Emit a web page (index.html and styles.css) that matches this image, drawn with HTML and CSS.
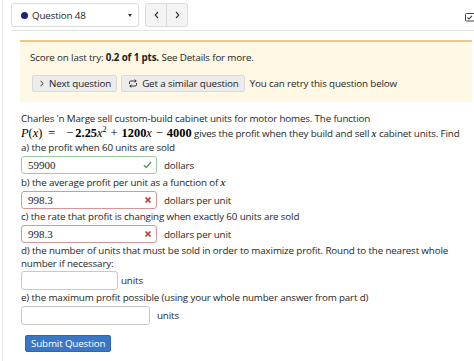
FILE: index.html
```html
<!DOCTYPE html>
<html>
<head>
<meta charset="utf-8">
<link rel="stylesheet" href="styles.css">
</head>
<body>
<div class="page">
  <div class="topbar">
    <div class="qselect">
      <span class="dot"></span>
      <span class="qlabel">Question 48</span>
      <span class="caret"></span>
    </div>
    <div class="navgroup">
      <span class="navbtn"><svg width="5" height="8" viewBox="0 0 5 8"><polyline points="4,1 1.2,4 4,7" fill="none" stroke="#333" stroke-width="1.1"/></svg></span>
      <span class="navbtn"><svg width="5" height="8" viewBox="0 0 5 8"><polyline points="1,1 3.8,4 1,7" fill="none" stroke="#333" stroke-width="1.1"/></svg></span>
    </div>
    <svg class="cornericon" width="9" height="9" viewBox="0 0 9 9"><rect x="0.5" y="0.5" width="11" height="7.5" rx="1" fill="none" stroke="#444" stroke-width="1"/><polyline points="2.5,4.5 4,6 7,2.8" fill="none" stroke="#444" stroke-width="1.1"/></svg>
  </div>

  <div class="scorebox">
    <div class="scoreline">Score on last try: <b>0.2 of 1 pts.</b> See Details for more.</div>
    <div class="actions">
      <span class="btn"><svg width="6" height="7" viewBox="0 0 6 7"><polyline points="1.5,1 4.2,3.5 1.5,6" fill="none" stroke="#333" stroke-width="1"/></svg>Next question</span>
      <span class="btn"><svg width="10" height="9" viewBox="0 0 10 9"><path d="M1.5 5 V3.2 Q1.5 2 2.8 2 H8.2 M6.6 0.6 L8.2 2 L6.6 3.4" fill="none" stroke="#333" stroke-width="1"/><path d="M8.5 4 V5.8 Q8.5 7 7.2 7 H1.8 M3.4 5.6 L1.8 7 L3.4 8.4" fill="none" stroke="#333" stroke-width="1"/></svg>Get a similar question</span>
      <span class="retry">You can retry this question below</span>
    </div>
  </div>

  <div class="question">
    <div class="line">Charles 'n Marge sell custom-build cabinet units for motor homes. The function</div>
    <div class="line"><span class="math"><i>P</i>(<i>x</i>)<span class="op eq">=</span><span class="op">−</span><span class="num">2.25</span><i>x</i><sup>2</sup><span class="op">+</span><span class="num">1200</span><i>x</i><span class="op">−</span><span class="num">4000</span></span> gives the profit when they build and sell <i class="mx">x</i> cabinet units. Find</div>
    <div class="line">a) the profit when 60 units are sold</div>
    <div class="ansrow">
      <span class="field correct w-long">59900<svg class="mark" width="9" height="8" viewBox="0 0 9 8"><polyline points="1,4.2 3.3,6.5 8,1.2" fill="none" stroke="#4f9f4f" stroke-width="1.5"/></svg></span>
      <span class="unit">dollars</span>
    </div>
    <div class="line">b) the average profit per unit as a function of <i class="mx">x</i></div>
    <div class="ansrow">
      <span class="field wrong w-long">998.3<svg class="mark" width="8" height="8" viewBox="0 0 8 8"><path d="M1.5 1.5 L6.5 6.5 M6.5 1.5 L1.5 6.5" stroke="#c0392b" stroke-width="1.7"/></svg></span>
      <span class="unit">dollars per unit</span>
    </div>
    <div class="line">c) the rate that profit is changing when exactly 60 units are sold</div>
    <div class="ansrow">
      <span class="field wrong w-long">998.3<svg class="mark" width="8" height="8" viewBox="0 0 8 8"><path d="M1.5 1.5 L6.5 6.5 M6.5 1.5 L1.5 6.5" stroke="#c0392b" stroke-width="1.7"/></svg></span>
      <span class="unit">dollars per unit</span>
    </div>
    <div class="line tight">d) the number of units that must be sold in order to maximize profit. Round to the nearest whole number if necessary:</div>
    <div class="ansrow">
      <span class="field w-short"></span>
      <span class="unit near">units</span>
    </div>
    <div class="line">e) the maximum profit possible (using your whole number answer from part d)</div>
    <div class="ansrow">
      <span class="field w-mid"></span>
      <span class="unit">units</span>
    </div>
    <div class="submitrow">
      <span class="submit">Submit Question</span>
    </div>
  </div>
</div>
</body>
</html>
```

FILE: styles.css
```css
html, body {
  margin: 0;
  padding: 0;
  background: #fff;
  overflow: hidden;
}
body {
  font-family: "Open Sans", "Liberation Sans", sans-serif;
  font-size: 9.8px;
  letter-spacing: -0.15px;
  color: #1e1e1e;
  padding-left: 2px;
}
.page {
  border-left: 1px solid #e6e6e6;
  min-height: 361px;
}
.topbar {
  margin-left: 8px;
  height: 27px;
  padding-top: 3px;
  border-bottom: 1px solid #e4e4e4;
  display: flex;
  align-items: flex-start;
}
.qselect {
  box-sizing: border-box;
  width: 128px;
  height: 24px;
  border: 1px solid #dcdcdc;
  border-radius: 3px;
  display: flex;
  align-items: center;
  padding-left: 9px;
  padding-right: 6px;
  background: #fff;
}
.dot {
  width: 7px;
  height: 7px;
  border-radius: 50%;
  background: #1d2080;
  margin-right: 4px;
}
.qlabel {
  flex: 1;
}
.caret {
  width: 0;
  height: 0;
  border-left: 2.5px solid transparent;
  border-right: 2.5px solid transparent;
  border-top: 3.5px solid #333;
}
.navgroup {
  margin-left: 6px;
  height: 24px;
  box-sizing: border-box;
  border: 1px solid #dcdcdc;
  border-radius: 3px;
  background: #f4f4f4;
  display: flex;
}
.navbtn {
  width: 20px;
  display: flex;
  align-items: center;
  justify-content: center;
}
.navbtn + .navbtn {
  border-left: 1px solid #dcdcdc;
}
.cornericon {
  margin-left: auto;
  margin-top: 10px;
}
.scorebox {
  margin: 9px 2px 0 17px;
  background: #fff8e4;
  border-top: 2px solid #f2c488;
  padding: 9px 10px 10px 10px;
}
.scoreline {
  line-height: 14px;
}
.scoreline b {
  font-weight: 700;
}
.actions {
  margin-top: 10px;
  margin-left: 2px;
  display: flex;
  align-items: center;
  gap: 4px;
}
.btn {
  box-sizing: border-box;
  height: 17px;
  display: inline-flex;
  align-items: center;
  gap: 3px;
  padding: 0 5px 0 6px;
  background: #ececec;
  border: 1px solid #dadada;
  border-radius: 2px;
  color: #222;
}
.btn svg {
  margin-right: 1px;
}
.retry {
  margin-left: 1px;
}
.question {
  margin-left: 18px;
  margin-top: 10px;
}
.line {
  line-height: 14px;
  white-space: nowrap;
}
.line.tight {
  white-space: normal;
  width: 440px;
  line-height: 13px;
}
.math {
  font-family: "Liberation Serif", "Times New Roman", serif;
  font-size: 12.4px;
  letter-spacing: 0;
  color: #000;
  line-height: 14px;
}
.math i, .mx {
  font-family: "Liberation Serif", "Times New Roman", serif;
  font-style: italic;
  letter-spacing: 0;
}
.mx {
  font-size: 11px;
  color: #000;
}
.math .num {
  font-weight: 700;
}
.math sup {
  font-size: 8px;
  line-height: 0;
  vertical-align: 5px;
}
.math .op {
  margin: 0 4px;
}
.math .eq {
  margin: 0 6px;
}
.math .eq + .op {
  margin-left: 5px;
  margin-right: 2px;
}
.ansrow {
  display: flex;
  align-items: center;
  margin: 1px 0;
}
.field {
  box-sizing: border-box;
  height: 18px;
  border: 1px solid #c8c8c8;
  border-radius: 3px;
  background: #fff;
  display: flex;
  align-items: center;
  padding: 0 4px 0 6px;
  font-family: "Liberation Serif", "Times New Roman", serif;
  font-size: 11px;
  letter-spacing: 0;
  color: #222;
}
.field.correct {
  border-color: #9ccb9c;
}
.field.wrong {
  border-color: #d89696;
}
.mark {
  margin-left: auto;
}
.w-long { width: 136px; }
.w-short { width: 97px; height: 19px; }
.w-mid { width: 129px; height: 19px; }
.unit {
  margin-left: 7px;
}
.unit.near {
  margin-left: 3px;
}
.submitrow {
  margin-top: 10px;
  margin-left: 4px;
  display: flex;
}
.submit {
  box-sizing: border-box;
  height: 17px;
  padding: 0 5px;
  display: inline-flex;
  align-items: center;
  background: #3a76c6;
  border: 1px solid #2f66b3;
  border-radius: 2px;
  color: #fff;
}
```
